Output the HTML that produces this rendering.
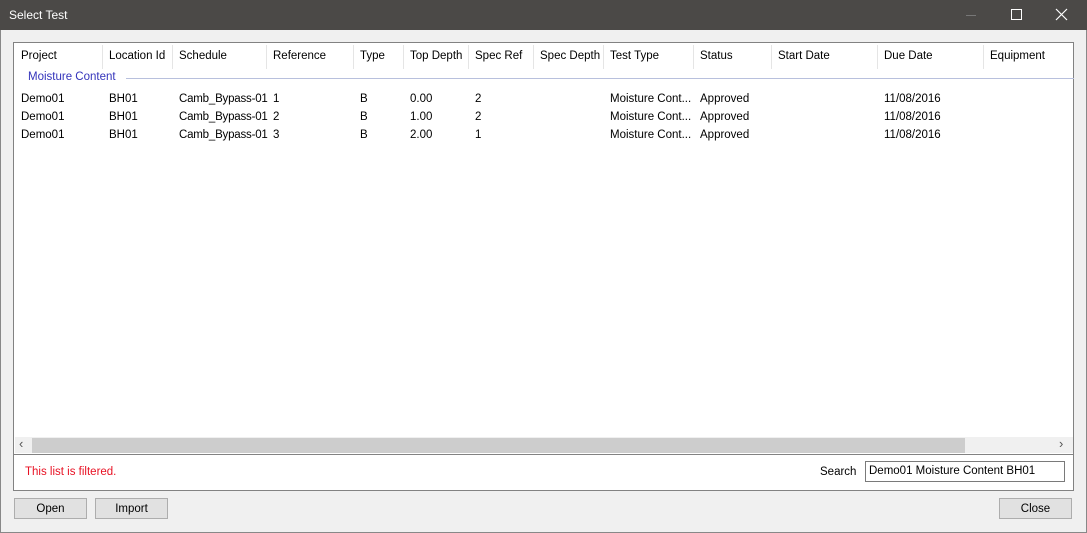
<!DOCTYPE html>
<html><head><style>
*{margin:0;padding:0;box-sizing:border-box}
body{width:1087px;height:533px;background:#f0f0f0;font-family:"Liberation Sans",sans-serif;font-size:11.5px;color:#000;position:relative;overflow:hidden}
.a{position:absolute;white-space:nowrap}
#tb{left:0;top:0;width:1087px;height:30px;background:#4b4947;color:#fff}
#list{left:13px;top:42px;width:1061px;height:449px;background:#fff;border:1px solid #828282}
.sep{position:absolute;top:2px;width:1px;height:24px;background:#e5e5e5}
.btn{position:absolute;height:21px;background:#e1e1e1;border:1px solid #adadad;text-align:center;line-height:20px}
</style></head><body>
<div class="a" id="tb"><span class="a" style="left:9px;top:8px;font-size:12px">Select Test</span>
<div class="a" style="left:966px;top:15px;width:10px;height:1px;background:#777"></div>
<div class="a" style="left:1011px;top:9px;width:11px;height:11px;border:1px solid #fff"></div>
<svg class="a" style="left:1055px;top:8px" width="13" height="13"><path d="M1 1L12 12M12 1L1 12" stroke="#fff" stroke-width="1.2"/></svg>
</div>
<div class="a" style="left:0;top:30px;width:1px;height:503px;background:#888"></div>
<div class="a" style="left:1086px;top:30px;width:1px;height:503px;background:#888"></div>
<div class="a" style="left:0;top:532px;width:1087px;height:1px;background:#888"></div>
<div class="a" id="list">
<div class="sep" style="left:88px"></div><div class="sep" style="left:158px"></div><div class="sep" style="left:252px"></div><div class="sep" style="left:339px"></div><div class="sep" style="left:389px"></div><div class="sep" style="left:454px"></div><div class="sep" style="left:519px"></div><div class="sep" style="left:589px"></div><div class="sep" style="left:679px"></div><div class="sep" style="left:757px"></div><div class="sep" style="left:863px"></div><div class="sep" style="left:969px"></div>
<span class="a" style="left:7px;top:7px">Project</span><span class="a" style="left:95px;top:7px">Location Id</span><span class="a" style="left:165px;top:7px">Schedule</span><span class="a" style="left:259px;top:7px">Reference</span><span class="a" style="left:346px;top:7px">Type</span><span class="a" style="left:396px;top:7px">Top Depth</span><span class="a" style="left:461px;top:7px">Spec Ref</span><span class="a" style="left:526px;top:7px">Spec Depth</span><span class="a" style="left:596px;top:7px">Test Type</span><span class="a" style="left:686px;top:7px">Status</span><span class="a" style="left:764px;top:7px">Start Date</span><span class="a" style="left:870px;top:7px">Due Date</span><span class="a" style="left:976px;top:7px">Equipment</span>
<span class="a" style="left:14px;top:28px;color:#3333bb">Moisture Content</span>
<div class="a" style="left:112px;top:35px;width:948px;height:1px;background:#b8c0dd"></div>
<div class="a" style="left:7px;top:47px;line-height:18px">Demo01<br>Demo01<br>Demo01</div>
<div class="a" style="left:95px;top:47px;line-height:18px">BH01<br>BH01<br>BH01</div>
<div class="a" style="left:165px;top:47px;line-height:18px;letter-spacing:-0.2px">Camb_Bypass-01<br>Camb_Bypass-01<br>Camb_Bypass-01</div>
<div class="a" style="left:259px;top:47px;line-height:18px">1<br>2<br>3</div>
<div class="a" style="left:346px;top:47px;line-height:18px">B<br>B<br>B</div>
<div class="a" style="left:396px;top:47px;line-height:18px">0.00<br>1.00<br>2.00</div>
<div class="a" style="left:461px;top:47px;line-height:18px">2<br>2<br>1</div>
<div class="a" style="left:596px;top:47px;line-height:18px">Moisture Cont...<br>Moisture Cont...<br>Moisture Cont...</div>
<div class="a" style="left:686px;top:47px;line-height:18px">Approved<br>Approved<br>Approved</div>
<div class="a" style="left:870px;top:47px;line-height:18px">11/08/2016<br>11/08/2016<br>11/08/2016</div>
<div class="a" style="left:1px;top:394px;width:1058px;height:16px;background:#f0f0f0"></div>
<div class="a" style="left:18px;top:395px;width:933px;height:15px;background:#cdcdcd"></div>
<span class="a" style="left:5px;top:393px;color:#555;font-size:13px">‹</span>
<span class="a" style="left:1045px;top:393px;color:#555;font-size:13px">›</span>
<div class="a" style="left:0;top:411px;width:1059px;height:1px;background:#828282"></div>
<span class="a" style="left:11px;top:423px;color:#e81123">This list is filtered.</span>
<span class="a" style="left:806px;top:423px">Search</span>
<div class="a" style="left:851px;top:418px;width:200px;height:21px;border:1px solid #7a7a7a;background:#fff;padding:3px 3px">Demo01 Moisture Content BH01</div>
</div>
<div class="btn" style="left:14px;top:498px;width:73px">Open</div>
<div class="btn" style="left:95px;top:498px;width:73px">Import</div>
<div class="btn" style="left:999px;top:498px;width:73px">Close</div>
</body></html>
